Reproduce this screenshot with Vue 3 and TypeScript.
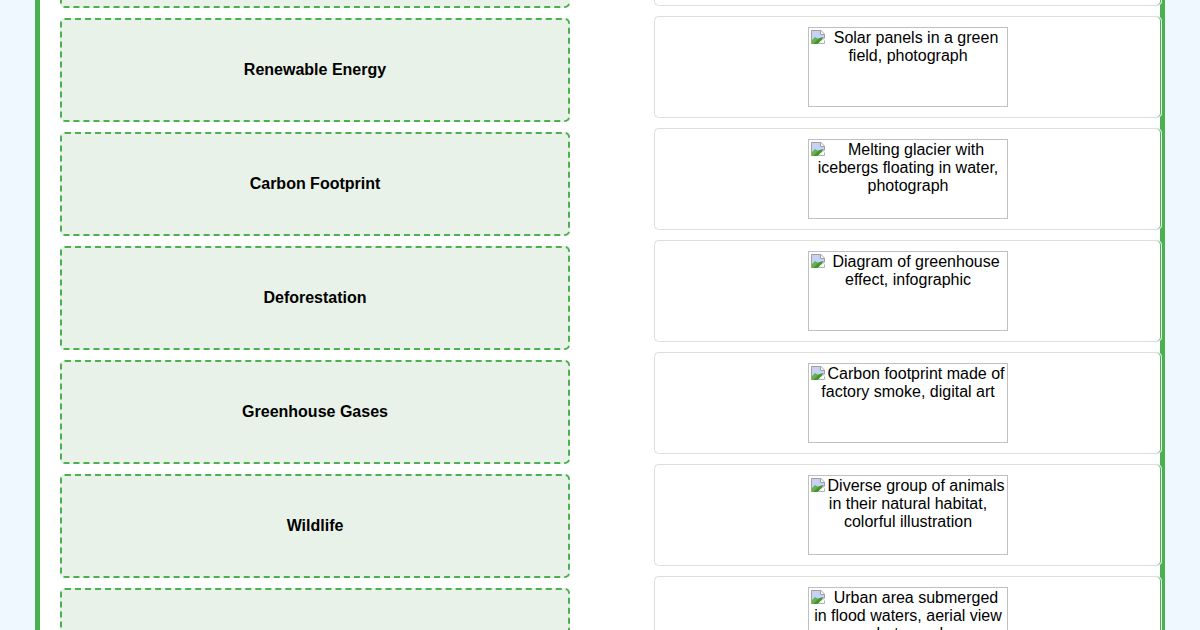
<script setup lang="ts">
const terms: string[] = [
  'Climate Change',
  'Renewable Energy',
  'Carbon Footprint',
  'Deforestation',
  'Greenhouse Gases',
  'Wildlife',
  'Sea Level Rise',
];

const pictures: string[] = [
  'Forest being cut down, photograph',
  'Solar panels in a green field, photograph',
  'Melting glacier with icebergs floating in water, photograph',
  'Diagram of greenhouse effect, infographic',
  'Carbon footprint made of factory smoke, digital art',
  'Diverse group of animals in their natural habitat, colorful illustration',
  'Urban area submerged in flood waters, aerial view photograph',
];
</script>

<template>
  <div class="page">
    <div class="game">
      <div class="columns">
        <div class="column terms">
          <div v-for="term in terms" :key="term" class="term">{{ term }}</div>
        </div>
        <div class="column pictures">
          <div v-for="alt in pictures" :key="alt" class="picture">
            <div class="thumb">
              <svg class="missing" width="16" height="16" viewBox="0 0 16 16">
                <path d="M1 1h10l4 4v5L4 15H1z" fill="#c6d3f5" />
                <path d="M1 15v-3l4-4 3 1.500 5-1.500-7 7z" fill="#6fae50" />
                <path d="M3 15l6-5.500 5-1.500-6 7z" fill="#45952f" />
                <path d="M1.500 14.500v-13h9.300l3.700 3.700v3.800" fill="none" stroke="#9f9f9f" />
                <path d="M10.500 1.500v4h4" fill="#f4f6fb" stroke="#9f9f9f" />
                <path d="M9 14.500h5.500v-3" fill="none" stroke="#b0b0b0" />
              </svg>
              {{ alt }}
            </div>
          </div>
        </div>
      </div>
    </div>
  </div>
</template>

<style>
body {
  margin: 0;
  background: #f0f8ff;
}
</style>

<style scoped>
.page {
  height: 100vh;
  overflow: hidden;
  padding: 0 35px;
  font-family: "Liberation Sans", Arial, sans-serif;
  font-size: 16px;
  color: #000;
}

.game {
  background: #fff;
  border-left: 5px solid #4caf50;
  border-right: 5px solid #4caf50;
  padding: 0 20px;
  height: 100%;
}

.columns {
  display: grid;
  grid-template-columns: 510px 508px;
  column-gap: 84px;
}

.column {
  display: flex;
  flex-direction: column;
  gap: 10px;
  margin-top: -96px;
}

.term {
  height: 100px;
  flex: none;
  display: flex;
  align-items: center;
  justify-content: center;
  background: #e8f2e8;
  border: 2px dashed #4caf50;
  border-radius: 5px;
  font-weight: 700;
}

.picture {
  flex: none;
  display: flex;
  justify-content: center;
  padding: 10px;
  background: #fff;
  border: 1px solid #ddd;
  border-right-color: #f2f2f2;
  border-radius: 5px;
  box-shadow: inset -1px 0 0 #4caf50;
}

.thumb {
  box-sizing: border-box;
  width: 200px;
  height: 80px;
  padding: 1px;
  border: 1px solid #c0c0c0;
  overflow: hidden;
  line-height: 18px;
  text-align: center;
}

.missing {
  float: left;
}
</style>
